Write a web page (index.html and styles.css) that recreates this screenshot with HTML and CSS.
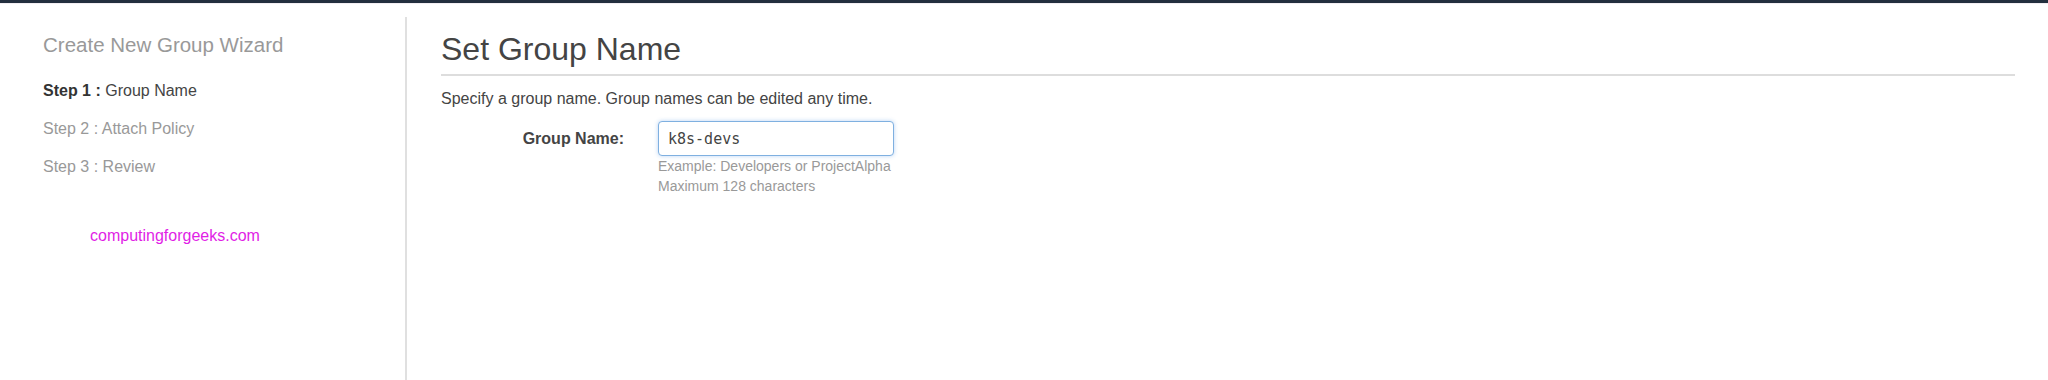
FILE: index.html
```html
<!DOCTYPE html>
<html lang="en">
<head>
    <meta charset="UTF-8">
    <meta name="viewport" content="width=device-width, initial-scale=1.0">
    <title>Create New Group Wizard</title>
    <link rel="stylesheet" href="styles.css">
</head>
<body>
    <div class="topbar"></div>
    <div class="wizard">
        <!-- Left: wizard steps -->
        <div class="sidebar">
            <div class="wizard-title">Create New Group Wizard</div>
            <ul class="steps">
                <li class="step active"><b>Step 1 :</b> Group Name</li>
                <li class="step">Step 2 : Attach Policy</li>
                <li class="step">Step 3 : Review</li>
            </ul>
            <div class="watermark">computingforgeeks.com</div>
        </div>
        <!-- Right: current step -->
        <div class="content">
            <h1 class="page-title">Set Group Name</h1>
            <p class="intro">Specify a group name. Group names can be edited any time.</p>
            <div class="form-row">
                <label class="form-label" for="groupName">Group Name:</label>
                <div class="form-field">
                    <input class="text-input" id="groupName" type="text" value="k8s-devs">
                    <div class="hint">Example: Developers or ProjectAlpha</div>
                    <div class="hint">Maximum 128 characters</div>
                </div>
            </div>
        </div>
    </div>
</body>
</html>
```

FILE: styles.css
```css
body {
    margin: 0;
    padding: 0;
    background: #fff;
    font-family: "Liberation Sans", Arial, sans-serif;
    color: #444;
}
.topbar {
    height: 3px;
    background: #232f3e;
    border-bottom: 1px solid #f2eef2;
}
.wizard {
    display: flex;
    height: 376px;
}
.sidebar {
    width: 362px;
    padding: 16px 0 0 43px;
    margin-top: 13px;
    border-right: 2px solid #e0e0e0;
    flex-shrink: 0;
}
.wizard-title {
    font-size: 20.5px;
    color: #999;
    line-height: 24px;
}
.steps {
    list-style: none;
    margin: 25px 0 0;
    padding: 0;
}
.step {
    font-size: 16px;
    line-height: 18px;
    color: #999;
    margin-bottom: 20px;
}
.step.active {
    color: #444;
}
.step b {
    color: #333;
}
.watermark {
    margin: 51px 0 0 47px;
    font-size: 16px;
    color: #e11ee6;
}
.content {
    flex: 1;
    padding: 0 33px 0 34px;
}
.page-title {
    margin: 25px 0 0;
    font-size: 32px;
    font-weight: normal;
    line-height: 40px;
    color: #444;
    padding-bottom: 5px;
    border-bottom: 2px solid #ddd;
}
.intro {
    margin: 13px 0 0;
    font-size: 16px;
    line-height: 20px;
    color: #444;
}
.form-row {
    display: flex;
    margin-top: 12px;
}
.form-label {
    width: 183px;
    text-align: right;
    padding-top: 9px;
    font-size: 16px;
    font-weight: bold;
    color: #444;
}
.form-field {
    margin-left: 34px;
}
.text-input {
    display: block;
    box-sizing: border-box;
    width: 236px;
    height: 35px;
    padding: 0 9px;
    border: 1px solid #7fb0e0;
    border-radius: 4px;
    box-shadow: 0 0 4px rgba(102, 160, 230, 0.45);
    font-family: "DejaVu Sans Mono", monospace;
    font-size: 15px;
    color: #444;
    outline: none;
}
.hint {
    font-size: 14px;
    line-height: 20px;
    color: #999;
}
.text-input + .hint {
    margin-top: 0;
}
```
